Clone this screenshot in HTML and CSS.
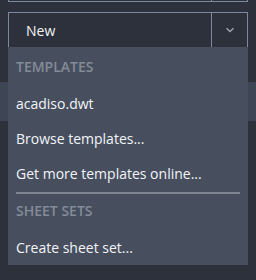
FILE: index.html
```html
<!DOCTYPE html>
<html lang="en">

<head>
    <meta charset="UTF-8">
    <meta name="viewport" content="width=device-width, initial-scale=1.0">
    <title>New</title>
    <link rel="stylesheet" href="styles.css">
</head>

<body>
    <div class="panel">
        <div class="field field-prev">
            <span class="field-label"></span>
            <span class="field-arrow"></span>
        </div>

        <div class="picker">
            <div class="field field-new">
                <span class="field-label">New</span>
                <span class="field-arrow">
                    <svg width="10" height="6" viewBox="0 0 10 6">
                        <path d="M1.5 1.2 L5 4.5 L8.5 1.2" fill="none" stroke="#9aa3b0" stroke-width="1.5"/>
                    </svg>
                </span>
            </div>

            <!-- menu opened over the list below -->
            <div class="menu">
                <div class="menu-head">TEMPLATES</div>
                <div class="menu-item">acadiso.dwt</div>
                <div class="menu-item">Browse templates...</div>
                <div class="menu-item">Get more templates online...</div>
                <div class="menu-sep"></div>
                <div class="menu-head">SHEET SETS</div>
                <div class="menu-item">Create sheet set...</div>
            </div>
        </div>

        <div class="list">
            <div class="list-row list-row-active"></div>
            <div class="list-row"></div>
            <div class="list-row"></div>
            <div class="list-row"></div>
        </div>
    </div>
</body>

</html>
```

FILE: styles.css
```css
html,
body {
    min-height: 280px;
}

body {
    margin: 0;
    background-color: #2c313b;
    font-family: "Open Sans", "Noto Sans", sans-serif;
    color: #f2f4f7;
}

.panel {
    padding: 0 8px;
    min-height: 280px;
}

.field {
    display: flex;
    border: 1px solid #7d8a9c;
    box-sizing: border-box;
}

.field-label {
    flex: 1;
    display: flex;
    align-items: center;
    padding-left: 17px;
    font-size: 14px;
}

.field-arrow {
    width: 35px;
    border-left: 1px solid #7d8a9c;
    display: flex;
    align-items: center;
    justify-content: center;
}

.field-prev {
    margin-top: -30px;
    height: 32px;
}

.picker {
    position: relative;
    margin-top: 10px;
}

.field-new {
    height: 36px;
}

.menu {
    /* sits over the list rows */
    position: absolute;
    top: 35px;
    left: 0;
    right: 0;
    background-color: #474f5f;
    padding: 6px 8px 0;
    z-index: 1;
}

.menu-head {
    height: 28px;
    line-height: 27px;
    margin-bottom: 5px;
    font-size: 14px;
    font-weight: 600;
    color: #848b97;
}

.menu-item {
    height: 35px;
    line-height: 35px;
    font-size: 14px;
}

.menu-sep {
    height: 2px;
    margin: 1px 0 3px;
    background-color: #7f8590;
}

.list {
    margin: 34px -8px 0;
}

.list-row {
    height: 39px;
}

.list-row-active {
    background-color: #3e4554;
}
```
